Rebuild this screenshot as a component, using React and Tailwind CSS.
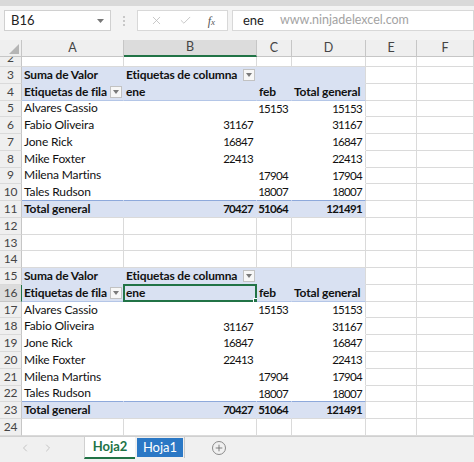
import { X, Check, ChevronLeft, ChevronRight, Plus } from 'lucide-react';

const FONT = { fontFamily: 'Lato, "Liberation Sans", sans-serif' };

const COLS = [
  { key: 'A', w: 'w-[102px]' },
  { key: 'B', w: 'w-[133px]' },
  { key: 'C', w: 'w-[35px]' },
  { key: 'D', w: 'w-[74px]' },
  { key: 'E', w: 'w-[51px]' },
  { key: 'F', w: 'w-[57px]' },
];

const pivot = [
  { type: 'h1', cells: ['Suma de Valor', 'Etiquetas de columna', '', ''] },
  { type: 'h2', cells: ['Etiquetas de fila', 'ene', 'feb', 'Total general'] },
  { type: 'data', cells: ['Alvares Cassio', '', '15153', '15153'] },
  { type: 'data', cells: ['Fabio Oliveira', '31167', '', '31167'] },
  { type: 'data', cells: ['Jone Rick', '16847', '', '16847'] },
  { type: 'data', cells: ['Mike Foxter', '22413', '', '22413'] },
  { type: 'data', cells: ['Milena Martins', '', '17904', '17904'] },
  { type: 'last', cells: ['Tales Rudson', '', '18007', '18007'] },
  { type: 'total', cells: ['Total general', '70427', '51064', '121491'] },
];

// rows 3..24
const rows = [
  ...pivot,
  { type: 'empty' },
  { type: 'empty' },
  { type: 'empty' },
  ...pivot,
  { type: 'empty' },
].map((r, i) => ({ ...r, n: i + 3 }));

const Drop = () => (
  <span className="w-[12px] h-[12px] shrink-0 border border-[#c2c2c2] bg-[#f7f7f7] flex items-center justify-center">
    <svg width="6" height="4" viewBox="0 0 6 4">
      <path d="M0 0h6L3 4z" fill="#7a7a7a" />
    </svg>
  </span>
);

const PivotCell = ({ row, ci, text }) => {
  const t = row.type;
  const shaded = t === 'h1' || t === 'h2' || t === 'total';
  const right = (t === 'data' || t === 'last' || t === 'total') && ci > 0;
  const selected = row.n === 16 && ci === 1;
  let border = 'border-b-white';
  if (t === 'h1') border = 'border-b-[#d9e1f2]';
  if (t === 'h2') border = 'border-b-[#b4c6e7]';
  if (t === 'last') border = 'border-b-[#8ea9db]';
  if (t === 'total') border = 'border-b-[#dadada]';
  const rBorder = ci === 3 ? 'border-r-[#dadada]' : shaded ? 'border-r-[#d9e1f2]' : 'border-r-white';

  return (
    <div
      className={`${COLS[ci].w} h-full shrink-0 border-r border-b ${border} ${rBorder} ${shaded ? 'bg-[#d9e1f2] font-bold' : 'bg-white'} ${right ? 'justify-end pr-[3px]' : 'justify-between pr-[1px]'} flex items-center pl-[2px] relative text-[#111]`}
    >
      <span className={`whitespace-nowrap leading-none ${right ? 'text-[11.5px] tracking-[-0.7px]' : ''}`}>{text}</span>
      {t === 'h1' && ci === 1 && <Drop />}
      {t === 'h2' && ci === 0 && <Drop />}
      {selected && (
        <div className="absolute -left-[1px] -top-[1px] -right-[1px] -bottom-[1px] border-2 border-[#217346]">
          <div className="absolute -right-[4px] -bottom-[4px] w-[6px] h-[6px] bg-[#217346] border border-white" />
        </div>
      )}
    </div>
  );
};

const PlainCell = ({ ci }) => (
  <div className={`${COLS[ci].w} h-full shrink-0 border-r border-b border-[#dadada] bg-white`} />
);

const Row = ({ row }) => {
  const isPivot = row.type !== 'empty';
  const sel = row.n === 16;
  return (
    <div className="flex h-[16.78px]">
      <div
        className={`w-[22px] shrink-0 h-full flex items-center justify-center border-r border-b text-[12px] text-[#444] ${sel ? 'bg-[#dcdcdc] border-r-[#217346] border-b-[#c6c6c6]' : 'bg-[#efefef] border-r-[#c6c6c6] border-b-[#dadada]'}`}
      >
        {row.n}
      </div>
      {COLS.map((c, ci) =>
        isPivot && ci < 4 ? (
          <PivotCell key={c.key} row={row} ci={ci} text={row.cells[ci]} />
        ) : (
          <PlainCell key={c.key} ci={ci} />
        )
      )}
    </div>
  );
};

export default function App() {
  return (
    <div className="w-[474px] h-[462px] overflow-hidden bg-white text-[12px] tracking-[-0.15px] select-none" style={FONT}>
      {/* formula bar */}
      <div className="h-[6px] bg-[#d9d9d9]" />
      <div className="h-[34px] bg-[#f3f3f3] flex items-start pt-[4px] pl-[4px] tracking-normal">
        <div className="w-[107px] h-[21px] bg-white border border-[#d0d0d0] flex items-center justify-between pl-[6px] pr-[6px] text-[#222]">
          <span className="text-[13px]">B16</span>
          <svg width="7" height="4" viewBox="0 0 7 4">
            <path d="M0 0h7L3.5 4z" fill="#777" />
          </svg>
        </div>
        <div className="w-[26px] h-[21px] flex flex-col items-center justify-center gap-[2px]">
          <span className="w-[2px] h-[2px] bg-[#c8c8c8]" />
          <span className="w-[2px] h-[2px] bg-[#c8c8c8]" />
          <span className="w-[2px] h-[2px] bg-[#c8c8c8]" />
        </div>
        <div className="w-[91px] h-[21px] bg-white border border-[#d8d8d8] flex items-center justify-around px-[4px]">
          <X size={13} strokeWidth={1.5} className="text-[#bdbdbd]" />
          <Check size={13} strokeWidth={1.5} className="text-[#bdbdbd]" />
          <span className="italic text-[#555] text-[12px]" style={{ fontFamily: '"Liberation Serif", serif' }}>
            f<span className="text-[9px]">x</span>
          </span>
        </div>
        <div className="ml-[4px] flex-1 h-[21px] bg-white border border-[#d8d8d8] flex items-center pl-[10px] text-[13px]">
          <span className="text-[#222]">ene</span>
          <span className="ml-[16px] text-[#a3a3a3] text-[12.5px]">www.ninjadelexcel.com</span>
        </div>
      </div>

      {/* column headers */}
      <div className="flex h-[17px] bg-[#efefef] text-[12.5px] text-[#444] tracking-normal">
        <div className="w-[22px] shrink-0 h-full border-r border-b border-[#c6c6c6] flex items-end justify-end p-[2px]">
          <svg width="10" height="10" viewBox="0 0 10 10">
            <path d="M10 0V10H0z" fill="#b5b5b5" />
          </svg>
        </div>
        {COLS.map((c) => (
          <div
            key={c.key}
            className={`${c.w} shrink-0 h-full flex items-center justify-center border-r ${c.key === 'B' ? 'bg-[#dcdcdc] border-b-2 border-b-[#217346] border-r-[#c6c6c6]' : 'border-b border-[#c6c6c6]'}`}
          >
            {c.key}
          </div>
        ))}
      </div>

      {/* partially scrolled row 2 */}
      <div className="flex h-[10px] overflow-hidden">
        <div className="w-[22px] shrink-0 h-full bg-[#efefef] border-r border-b border-r-[#c6c6c6] border-b-[#dadada] flex items-end justify-center text-[12px] text-[#444] leading-[16px]">
          2
        </div>
        {COLS.map((c, ci) => (
          <PlainCell key={c.key} ci={ci} />
        ))}
      </div>

      {rows.map((r) => (
        <Row key={r.n} row={r} />
      ))}

      {/* sheet tabs */}
      <div className="h-[27px] bg-[#f0f0f0] border-t border-[#d0d0d0] flex items-start text-[13px] tracking-normal">
        <div className="w-[84px] h-[22px] flex items-center pl-[19px] gap-[11px] text-[#c4c4c4]">
          <ChevronLeft size={12} strokeWidth={2} />
          <ChevronRight size={12} strokeWidth={2} />
        </div>
        <div className="w-[51px] h-[22px] bg-white border-b-2 border-[#217346] flex items-center justify-center font-bold text-[#217346] border-l border-l-[#d0d0d0]">
          Hoja2
        </div>
        <div className="ml-[2px] mt-[1px] w-[46px] h-[19px] bg-[#2b78c5] text-white flex items-center justify-center">
          Hoja1
        </div>
        <div className="ml-[1px] w-px h-[21px] bg-[#c8c8c8]" />
        <div className="ml-[27px] mt-[4px] w-[14px] h-[14px] rounded-full border border-[#8a8a8a] flex items-center justify-center text-[#6a6a6a]">
          <Plus size={10} strokeWidth={2} />
        </div>
      </div>
    </div>
  );
}
